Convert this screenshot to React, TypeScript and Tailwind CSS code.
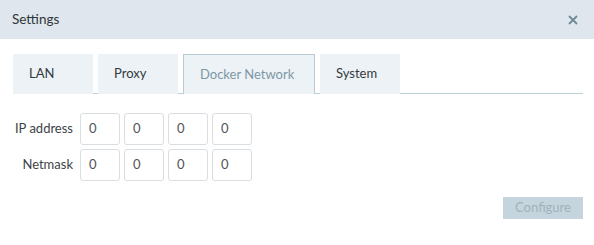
import React from "react";

const Tab = ({ label, active, w }: { label: string; active?: boolean; w: string }) => (
  <div
    className={
      (active
        ? "h-[40px] -mb-px flex items-center px-[16px] bg-[#edf2f6] border border-b-0 border-[#b9ccd6] text-[#7d97a5] "
        : "h-[40px] -mb-px flex items-center px-[16px] bg-[#edf2f6] text-[#333a3e] ") + w
    }
  >
    {label}
  </div>
);

const Octets = () => (
  <div className="flex gap-[4px]">
    {[0, 1, 2, 3].map((i) => (
      <div
        key={i}
        className="w-[40px] h-[32px] border border-[#d9dee2] rounded-[3px] flex items-center pl-[8px] text-[#4f5558]"
      >
        0
      </div>
    ))}
  </div>
);

export default function App() {
  return (
    <div
      className="w-[594px] h-[245px] bg-white text-[13px] text-[#333a3e]"
      style={{ fontFamily: "Lato, 'Open Sans', sans-serif" }}
    >
      <div className="h-[39px] bg-[#dfe6ed] flex items-center justify-between pl-[12px] pr-[16px]">
        <span className="text-[13.5px] text-[#2f3639]">Settings</span>
        <svg width="10" height="10" viewBox="0 0 10 10">
          <path d="M1 1 L9 9 M9 1 L1 9" stroke="#6f8896" strokeWidth="1.8" />
        </svg>
      </div>
      <div className="ml-[13px] mt-[15px] mr-[11px] flex gap-[5px] border-b border-[#bcd0da]">
        <Tab label="LAN" w="w-[80px]" />
        <Tab label="Proxy" w="w-[80px]" />
        <Tab label="Docker Network" active w="w-[132px]" />
        <Tab label="System" w="w-[80px]" />
      </div>
      <div className="mt-[19px] flex flex-col gap-[4px]">
        <div className="flex items-center">
          <div className="w-[73px] text-right text-[#3c4346]">IP address</div>
          <div className="ml-[7px]">
            <Octets />
          </div>
        </div>
        <div className="flex items-center">
          <div className="w-[73px] text-right text-[#3c4346]">Netmask</div>
          <div className="ml-[7px]">
            <Octets />
          </div>
        </div>
      </div>
      <div className="flex justify-end mr-[11px] mt-[16px]">
        <div className="w-[80px] h-[22px] bg-[#c5d5de] text-[#9fb2bd] flex items-center justify-center">
          Configure
        </div>
      </div>
    </div>
  );
}
